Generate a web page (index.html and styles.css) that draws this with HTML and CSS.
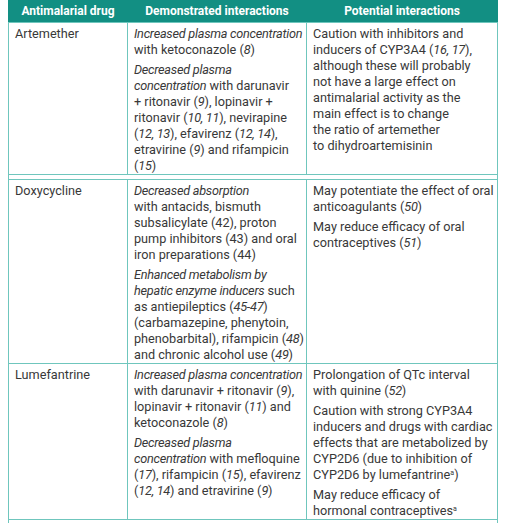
FILE: index.html
```html
<!DOCTYPE html>
<html>
<head>
<meta charset="utf-8">
<link rel="stylesheet" href="styles.css">
</head>
<body>
<table class="tbl">
  <colgroup>
    <col class="c1"><col class="c2"><col class="c3">
  </colgroup>
  <thead>
    <tr class="head">
      <th>Antimalarial drug</th>
      <th>Demonstrated interactions</th>
      <th>Potential interactions</th>
    </tr>
  </thead>
  <tbody>
    <tr class="row">
      <td>Artemether</td>
      <td>
        <p><i>Increased plasma concentration</i><br>with ketoconazole (<i>8</i>)</p>
        <p><i>Decreased plasma<br>concentration</i> with darunavir<br>+ ritonavir (<i>9</i>), lopinavir +<br>ritonavir (<i>10, 11</i>), nevirapine<br>(<i>12, 13</i>), efavirenz (<i>12, 14</i>),<br>etravirine (<i>9</i>) and rifampicin<br>(<i>15</i>)</p>
      </td>
      <td>
        <p>Caution with inhibitors and<br>inducers of CYP3A4 (<i>16, 17</i>),<br>although these will probably<br>not have a large effect on<br>antimalarial activity as the<br>main effect is to change<br>the ratio of artemether<br>to dihydroartemisinin</p>
      </td>
    </tr>
    <tr class="gap"><td colspan="3"></td></tr>
    <tr class="row">
      <td>Doxycycline</td>
      <td>
        <p><i>Decreased absorption</i><br>with antacids, bismuth<br>subsalicylate (42), proton<br>pump inhibitors (43) and oral<br>iron preparations (44)</p>
        <p><i>Enhanced metabolism by<br>hepatic enzyme inducers</i> such<br>as antiepileptics (<i>45-47</i>)<br>(carbamazepine, phenytoin,<br>phenobarbital), rifampicin (<i>48</i>)<br>and chronic alcohol use (<i>49</i>)</p>
      </td>
      <td>
        <p>May potentiate the effect of oral<br>anticoagulants (<i>50</i>)</p>
        <p>May reduce efficacy of oral<br>contraceptives (<i>51</i>)</p>
      </td>
    </tr>
    <tr class="row">
      <td>Lumefantrine</td>
      <td>
        <p><i>Increased plasma concentration</i><br>with darunavir + ritonavir (<i>9</i>),<br>lopinavir + ritonavir (<i>11</i>) and<br>ketoconazole (<i>8</i>)</p>
        <p><i>Decreased plasma<br>concentration</i> with mefloquine<br>(<i>17</i>), rifampicin (<i>15</i>), efavirenz<br>(<i>12, 14</i>) and etravirine (<i>9</i>)</p>
      </td>
      <td>
        <p>Prolongation of QTc interval<br>with quinine (<i>52</i>)</p>
        <p>Caution with strong CYP3A4<br>inducers and drugs with cardiac<br>effects that are metabolized by<br>CYP2D6 (due to inhibition of<br>CYP2D6 by lumefantrine<sup>a</sup>)</p>
        <p>May reduce efficacy of<br>hormonal contraceptives<sup>a</sup></p>
      </td>
    </tr>
    <tr class="gap"><td colspan="3"></td></tr>
  </tbody>
</table>
</body>
</html>
```

FILE: styles.css
```css
html, body {
  margin: 0;
  padding: 0;
  background: #ffffff;
}
body {
  padding: 0 8px;
  font-family: "Roboto", "Open Sans", sans-serif;
  font-size: 12.7px;
  line-height: 16px;
  color: #383838;
}
.tbl {
  border-collapse: collapse;
  width: 489px;
  table-layout: fixed;
}
.c1 { width: 119px; }
.c2 { width: 179px; }
.c3 { width: 191px; }
.head th {
  background: #128f83;
  color: #ffffff;
  font-weight: 700;
  font-size: 12px;
  white-space: nowrap;
  height: 21px;
  padding: 0 4px 1px;
  text-align: center;
  border-left: 1px solid #128f83;
  border-right: 1px solid #128f83;
  border-bottom: 1px solid #6fc6bd;
}
.row td {
  vertical-align: top;
  white-space: nowrap;
  border: 1px solid #6fc6bd;
  padding: 3px 4px 0 6px;
}
.row td p {
  margin: 0 0 4px;
}
.row td p:last-child {
  margin-bottom: 0;
}
.gap td {
  height: 4px;
  padding: 0;
  border: 1px solid #6fc6bd;
}
sup {
  font-size: 7px;
  line-height: 0;
  vertical-align: 4px;
}
i {
  font-style: italic;
  letter-spacing: -0.25px;
}
```
